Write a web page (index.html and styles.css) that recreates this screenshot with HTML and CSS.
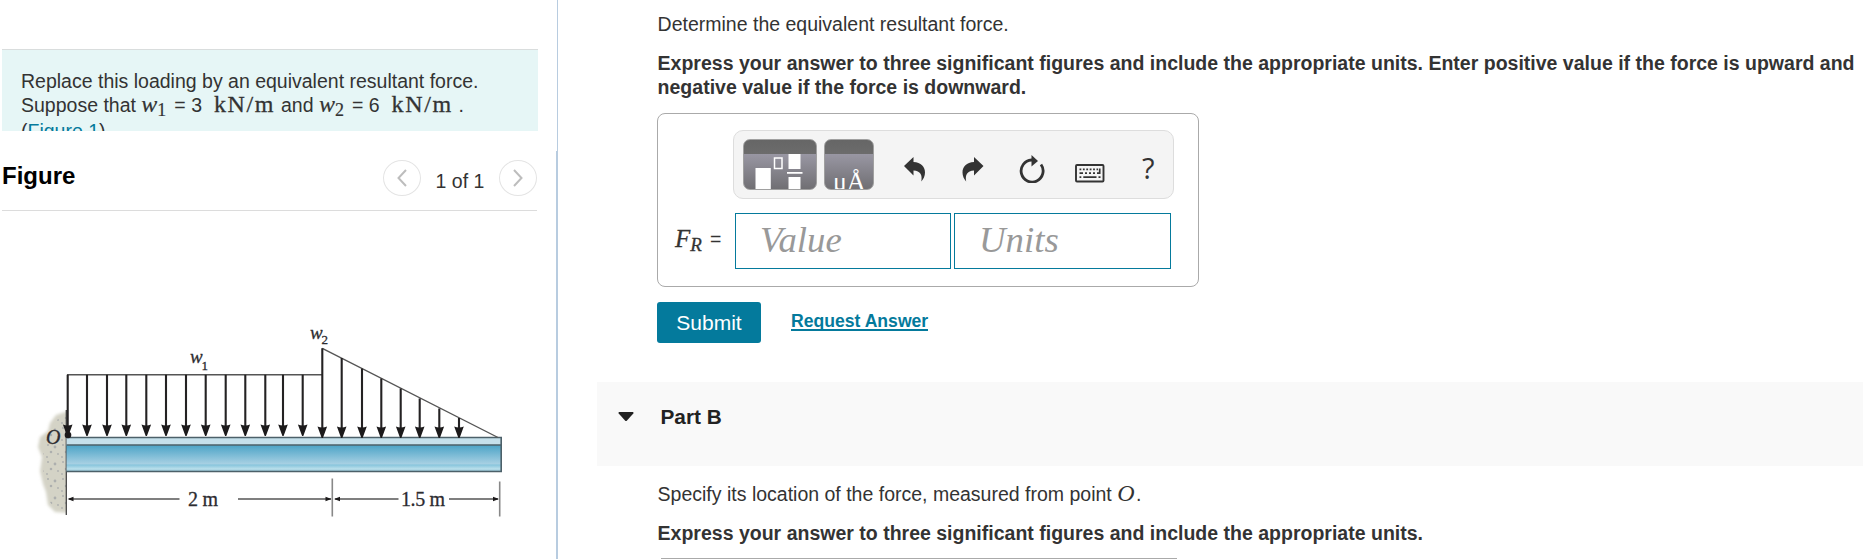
FILE: index.html
```
<!DOCTYPE html>
<html lang="en">
<head>
    <meta charset="UTF-8">
    <title>Equivalent resultant force</title>
    <link rel="stylesheet" href="styles.css">
</head>
<body>
<div class="page">
    <div class="left">
        <div class="problem">
            <div class="line">Replace this loading by an equivalent resultant force.</div>
            <div class="line">Suppose that <span class="var">w<sub>1</sub></span>= 3<span class="unit">kN/m</span>and <span class="var">w<sub>2</sub></span>= 6<span class="unit">kN/m</span>.</div>
            <div class="line last">(<a href="#figure">Figure 1</a>)</div>
        </div>
        <div class="figure-head" id="figure">
            <h2>Figure</h2>
            <div class="pager">
                <button class="round" aria-label="Previous"><svg width="10" height="18" viewBox="0 0 10 18"><path d="M9 1L1.500 9L9 17"/></svg></button>
                <span>1 of 1</span>
                <button class="round" aria-label="Next"><svg width="10" height="18" viewBox="0 0 10 18"><path d="M1 1L8.500 9L1 17"/></svg></button>
            </div>
        </div>
        <svg class="beam" width="550" height="348" viewBox="0 211 550 348">
            <defs>
                <linearGradient id="web" x1="0" y1="0" x2="0" y2="1">
                    <stop offset="0" stop-color="#4ba3c6"/>
                    <stop offset="0.7" stop-color="#a5cfe2"/>
                    <stop offset="0.76" stop-color="#8ac6dd"/>
                    <stop offset="0.9" stop-color="#b9dfeb"/>
                    <stop offset="1" stop-color="#8fc0d2"/>
                </linearGradient>
                <filter id="soft" x="-20%" y="-10%" width="140%" height="120%"><feGaussianBlur stdDeviation="1.6"/></filter>
                <pattern id="grit" width="15" height="17" patternUnits="userSpaceOnUse">
                    <g fill="#adafae">
                        <circle cx="3" cy="3" r="1"/><circle cx="10" cy="5" r="1.400"/>
                        <circle cx="6" cy="10" r="1.300"/><circle cx="13" cy="12" r="0.900"/>
                        <circle cx="2" cy="15" r="0.900"/>
                    </g>
                </pattern>
                <clipPath id="wallclip"><path d="M30 405H66V520H30Z"/></clipPath>
                <path id="head" d="M-4.800 -11.500Q0 -9.500 4.800 -11.500L.6 0H-.6Z"/>
            </defs>
            <!-- wall -->
            <g clip-path="url(#wallclip)">
                <path filter="url(#soft)" fill="#d4d3c6" d="M68 411L56 415L50 423L48 431L40 437L38 447L42 457L40 471L43 484L46 492L48 505L55 512L68 513Z"/>
                <path fill="url(#grit)" d="M66 414L55 421L52 431L44 438L42 448L45 460L43 474L48 488L50 502L56 510H66Z"/>
            </g>
            <path class="ink" d="M66.300 410V515"/>
            <!-- beam -->
            <rect x="66.500" y="437.500" width="434.500" height="8" fill="#c5e0eb"/>
            <rect x="66.500" y="445" width="434.500" height="26.500" fill="url(#web)"/>
            <path class="edge" d="M66.500 437.500H501.200V471.500H66.500M66.500 445H501"/>
            <!-- load outline -->
            <path class="thin" d="M67 374.700H322.300M322.300 348.300L498 437.500"/>
            <path class="arrow" d="M67.700 374.700V430M87 374.700V428M107 374.700V428M126.300 374.700V428M146.300 374.700V428M166 374.700V428M186 374.700V428M205.700 374.700V428M225.700 374.700V428M245.300 374.700V428M265.300 374.700V428M283 374.700V428M302.700 374.700V428M322.300 348.300V430M341.700 358V430M362 368.500V430M381.300 378.500V430M400.700 388.500V430M419.700 398.500V430M439.300 408.500V430M459 418V430"/>
            <g fill="#1c1a1b">
                <use href="#head" x="67.700" y="436"/><circle cx="68" cy="435" r="3.300"/>
                <use href="#head" x="87" y="436"/><use href="#head" x="107" y="436"/>
                <use href="#head" x="126.300" y="436"/><use href="#head" x="146.300" y="436"/>
                <use href="#head" x="166" y="436"/><use href="#head" x="186" y="436"/>
                <use href="#head" x="205.700" y="436"/><use href="#head" x="225.700" y="436"/>
                <use href="#head" x="245.300" y="436"/><use href="#head" x="265.300" y="436"/>
                <use href="#head" x="283" y="436"/><use href="#head" x="302.700" y="436"/>
                <use href="#head" x="322.300" y="438"/><use href="#head" x="341.700" y="438"/>
                <use href="#head" x="362" y="438"/><use href="#head" x="381.300" y="438"/>
                <use href="#head" x="400.700" y="438"/><use href="#head" x="419.700" y="438"/>
                <use href="#head" x="439.300" y="438"/><use href="#head" x="459" y="438"/>
            </g>
            <!-- dimensions -->
            <path class="thin" d="M69 499H179.500M238 499H331M335 499H398.500M449 499H498"/>
            <path class="tick" d="M332.300 478.500V516.500M499.700 481.500V516.500"/>
            <path fill="#1c1a1b" d="M67.500 499l6-2.200v4.400zM331.500 499l-6-2.200v4.400zM334 499l6-2.200v4.400zM499 499l-6-2.200v4.400z"/>
            <g class="labels">
                <text x="188" y="505.500" textLength="30">2 m</text>
                <text x="401" y="505.500" textLength="44">1.5 m</text>
                <text class="it" x="190" y="362.500">w</text><text class="small" x="201.500" y="370">1</text>
                <text class="it" x="310" y="338.500">w</text><text class="small" x="321.500" y="343.500">2</text>
                <text class="it big" x="46" y="443.500">O</text>
            </g>
        </svg>
    </div>
    <div class="divider"></div>
    <div class="right">
        <div class="part">
            <p>Determine the equivalent resultant force.</p>
            <p class="strong">Express your answer to three significant figures and include the appropriate units. Enter positive value if the force is upward and negative value if the force is downward.</p>
            <div class="answer">
                <div class="toolbar">
                    <button class="tool wide" aria-label="Templates">
                        <svg width="72" height="49" viewBox="0 0 72 49">
                            <g fill="#fff"><path d="M11.500 28h15.300v21H11.500zM44.500 14h12V29H44.500zM44.500 37h12v12H44.500zM43 32h15.500v1.800H43z"/></g>
                            <path fill="none" stroke="#fff" stroke-width="1.500" d="M30.500 18h7.500v10.500H30.500z"/>
                        </svg>
                    </button>
                    <button class="tool symbols"><span>μÅ</span></button>
                    <div class="icons">
                        <svg width="22" height="25" viewBox="0 0 22 25"><path d="M0 9L9.500 0V5C17 5.500 21 9.500 21 15.500C21 19 19.500 22 17.300 24.500C18.500 18 16.500 14 9.500 13.500V18.500Z"/></svg>
                        <svg width="22" height="25" viewBox="0 0 22 25"><path d="M21.500 9L12 0V5C4.500 5.500 .5 9.500 .5 15.500C.5 19 2 22 4.200 24.500C3 18 5 14 12 13.500V18.500Z"/></svg>
                        <svg width="26" height="28" viewBox="0 0 26 28"><path fill="none" stroke="#333" stroke-width="2.800" d="M14 5H12.500A11 11 0 1 0 22 9.500"/><path d="M12.500 0L19 6L12.500 11.500Z"/></svg>
                        <svg width="30" height="19" viewBox="0 0 30 19"><rect x="1" y="1" width="27.500" height="16.500" rx="1" fill="none" stroke="#333" stroke-width="1.900"/>
                            <path fill="none" stroke="#333" stroke-width="1.700" stroke-dasharray="1.800 1.600" d="M4.500 5.300H23"/>
                            <path fill="none" stroke="#333" stroke-width="1.700" d="M4.500 9.200H8M10 9.200H12M14 9.200H16M18 9.200H20M22 9.200H25.500M24.700 4.500V9.500M4.500 13.200H6.300M8.300 13.200H21.500M23.500 13.200H25.500"/></svg>
                        <span class="help">?</span>
                    </div>
                </div>
                <div class="entry">
                    <span class="fr">F<sub>R</sub></span><span class="eq">=</span>
                    <div class="field value">Value</div>
                    <div class="field units">Units</div>
                </div>
            </div>
            <div class="actions">
                <button class="submit">Submit</button>
                <a class="request" href="#">Request Answer</a>
            </div>
        </div>
        <div class="part-bar">
            <svg width="16" height="10" viewBox="0 0 16 10"><path d="M1 0H15Q16 .5 15.300 1.500L9 8.500Q8 9.500 7 8.500L.7 1.500Q0 .5 1 0Z"/></svg>
            <h3>Part B</h3>
        </div>
        <div class="part b">
            <p>Specify its location of the force, measured from point <i class="point">O</i>.</p>
            <p class="strong">Express your answer to three significant figures and include the appropriate units.</p>
            <div class="next"></div>
        </div>
    </div>
</div>
</body>
</html>
```
FILE: styles.css
```
body {
    margin: 0;
    background-color: #fff;
    color: #333;
    font-family: "Liberation Sans", Arial, sans-serif;
    font-size: 19.5px;
    line-height: 24px;
    overflow: hidden;
}

.page {
    display: flex;
    height: 559px;
    overflow: hidden;
}

.left {
    width: 556px;
    flex: none;
}

.problem {
    box-sizing: border-box;
    width: 536px;
    height: 82px;
    margin: 49px 0 0 2px;
    padding: 19px 0 0 19px;
    border-top: 1px solid #d9dddd;
    background-color: #e6f6f6;
    overflow: hidden;
}

.line {
    height: 24px;
    white-space: nowrap;
}

.line.last {
    padding-top: 2px;
}

a {
    color: #047a9c;
    text-decoration: none;
}

.var {
    display: inline-block;
    width: 33px;
    font-family: "Liberation Serif", serif;
    font-style: italic;
    font-size: 24px;
    line-height: 20px;
    -webkit-text-stroke: 0.2px #333;
}

.var sub {
    font-style: normal;
    font-size: 18px;
    line-height: 0;
    vertical-align: -4px;
}

.unit {
    display: inline-block;
    width: 67px;
    padding-left: 12px;
    font-family: "Liberation Serif", serif;
    font-size: 24px;
    letter-spacing: 1.6px;
    line-height: 20px;
    -webkit-text-stroke: 0.3px #333;
}

.figure-head {
    display: flex;
    justify-content: space-between;
    box-sizing: border-box;
    width: 535px;
    height: 80px;
    margin-left: 2px;
    padding-top: 29px;
    border-bottom: 1px solid #dcdcdc;
}

h2 {
    margin: 4px 0 0;
    color: #000;
    font-size: 24px;
    line-height: 24px;
}

.pager {
    display: flex;
    height: 36px;
}

.pager span {
    width: 78px;
    padding-top: 9px;
    text-align: center;
}

.round {
    display: flex;
    align-items: center;
    justify-content: center;
    width: 38px;
    height: 36px;
    padding: 0;
    border: 1px solid #e4e4e4;
    border-radius: 50%;
    background: none;
}

.round path {
    fill: none;
    stroke: #bdbdbd;
    stroke-width: 2;
}

/* beam drawing */
.beam {
    display: block;
}

.ink {
    stroke: #444;
    stroke-width: 1.3;
}

.edge {
    fill: none;
    stroke: #4c6069;
    stroke-width: 1.6;
}

.thin {
    fill: none;
    stroke: #555;
    stroke-width: 1.4;
}

.arrow {
    stroke: #242223;
    stroke-width: 2.1;
}

.tick {
    stroke: #888;
    stroke-width: 1.6;
}

.labels {
    font-family: "Liberation Serif", serif;
    font-size: 20px;
    fill: #2c2c30;
    stroke: #2c2c30;
    stroke-width: 0.3;
}

.labels .it {
    font-style: italic;
    font-size: 19px;
}

.labels .big {
    font-size: 20px;
}

.labels .small {
    font-size: 13px;
}

.divider {
    flex: none;
    width: 1px;
    height: 408px;
    padding-left: 1px;
    margin-top: 151px;
    background-color: #b8cce0;
}

/* upper part of the line is one pixel thinner */
.divider::before {
    content: "";
    display: block;
    width: 1px;
    height: 151px;
    margin-top: -151px;
    background-color: #b8cce0;
}

.right {
    width: 1266px;
    margin-left: 39px;
}

.part {
    width: 1206px;
    padding: 12px 0 0 60px;
}

p {
    margin: 0 0 15px;
    padding-left: 0.6px;
}

.strong {
    margin-bottom: 14px;
    font-weight: bold;
    letter-spacing: 0.005px;
}

.answer {
    box-sizing: border-box;
    width: 542px;
    height: 174px;
    padding: 16px 0 0 14px;
    border: 1px solid #aaa;
    border-radius: 8px;
}

.toolbar {
    display: flex;
    box-sizing: border-box;
    width: 441px;
    height: 69px;
    margin-left: 61px;
    padding: 8px 0 0 8.5px;
    border: 1px solid #ddd;
    border-radius: 10px;
    background-color: #f4f4f4;
}

.tool {
    box-sizing: border-box;
    flex: none;
    height: 51px;
    padding: 0;
    border: 1px solid #a0a0a0;
    border-radius: 7px;
    background: linear-gradient(#666 0, #6c6c6c 14px, #9997a3 14px, #706f73 100%);
    overflow: hidden;
}

.wide {
    width: 74.5px;
    margin-right: 6.5px;
}

.wide svg {
    display: block;
}

.symbols {
    width: 50.5px;
    color: #fff;
    font-family: "Liberation Serif", serif;
    font-size: 26px;
    line-height: 25px;
}

.symbols span {
    display: block;
    height: 20px;
    margin-top: 28px;
    padding-left: 1px;
}

.icons {
    display: flex;
    margin-left: 30px;
    fill: #333;
}

.icons svg {
    flex: none;
    margin: 18px 36px 0 0;
}

.icons svg:nth-child(3) {
    margin: 16px 30px 0 -1px;
}

.icons svg:nth-child(4) {
    margin: 25px 36px 0 0;
}

.help {
    margin: 15px 0 0 1px;
    font-family: "Open Sans", sans-serif;
    font-size: 29px;
    line-height: 28px;
}

.entry {
    display: flex;
    height: 56px;
    margin-top: 14px;
}

.fr {
    width: 37px;
    padding: 14px 0 0 3px;
    font-family: "Liberation Serif", serif;
    font-style: italic;
    font-size: 25px;
    -webkit-text-stroke: 0.3px #333;
}

.fr sub {
    font-size: 19px;
    line-height: 0;
    vertical-align: -4px;
}

.eq {
    width: 23px;
    padding-top: 14px;
    margin-left: -2px;
}

.field {
    box-sizing: border-box;
    width: 217px;
    height: 56px;
    margin-left: 2px;
    padding: 6px 0 0 24px;
    border: 1px solid #047a9c;
    color: #999;
    font-family: "Liberation Serif", serif;
    font-style: italic;
    font-size: 36.8px;
    line-height: 40px;
}

.value {
    width: 216px;
    margin-right: 1px;
}

.actions {
    display: flex;
    margin-top: 15px;
}

.submit {
    width: 104px;
    height: 41px;
    padding: 0;
    border: none;
    border-radius: 3px;
    background-color: #047a9c;
    color: #fff;
    font-family: "Liberation Sans", Arial, sans-serif;
    font-size: 21px;
}

.request {
    height: 18px;
    margin: 9px 0 0 30px;
    border-bottom: 2px solid #047a9c;
    font-size: 17.6px;
    font-weight: bold;
    line-height: 20px;
}

.part-bar {
    display: flex;
    box-sizing: border-box;
    width: 1266px;
    height: 84px;
    margin-top: 39px;
    padding: 30px 0 0 21px;
    background-color: #f9f9f9;
    fill: #222;
}

h3 {
    margin: -7px 0 0 26.5px;
    color: #222;
    font-size: 20.8px;
    line-height: 24px;
}

.b {
    padding-top: 16px;
}

.b .strong {
    margin-bottom: 13px;
}

.point {
    font-family: "Liberation Serif", serif;
    font-size: 24px;
    letter-spacing: 1.5px;
    line-height: 0;
}

/* top edge of the Part B answer box */
.next {
    width: 516px;
    height: 1px;
    margin-left: 4px;
    background-color: #aaa;
}
```
